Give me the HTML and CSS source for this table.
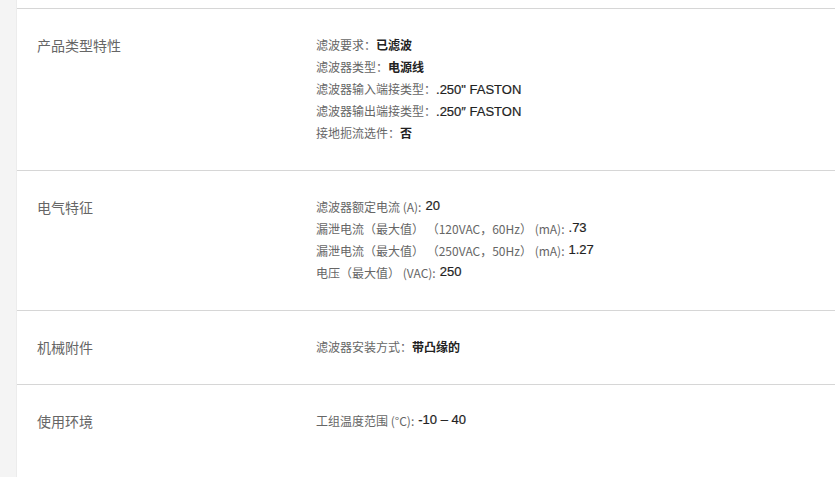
FILE: index.html
```html
<!DOCTYPE html>
<html lang="zh-CN">
<head>
<meta charset="utf-8">
<title>产品规格</title>
<link rel="stylesheet" href="styles.css">
</head>
<body>
<div class="page">
  <aside class="rail"></aside>
  <main class="specs">
    <section class="group">
      <h3 class="group-title">产品类型特性</h3>
      <ul class="attrs">
        <li><span class="k">滤波要求：</span><span class="v">已滤波</span></li>
        <li><span class="k">滤波器类型：</span><span class="v">电源线</span></li>
        <li><span class="k">滤波器输入端接类型：</span><span class="v lat">.250" FASTON</span></li>
        <li><span class="k">滤波器输出端接类型：</span><span class="v lat">.250″ FASTON</span></li>
        <li><span class="k">接地扼流选件：</span><span class="v">否</span></li>
      </ul>
    </section>
    <section class="group">
      <h3 class="group-title">电气特征</h3>
      <ul class="attrs">
        <li><span class="k">滤波器额定电流 (A):</span><span class="v lat num">20</span></li>
        <li><span class="k">漏泄电流（最大值） （120VAC，60Hz） (mA):</span><span class="v lat num">.73</span></li>
        <li><span class="k">漏泄电流（最大值） （250VAC，50Hz） (mA):</span><span class="v lat num">1.27</span></li>
        <li><span class="k">电压（最大值） (VAC):</span><span class="v lat num">250</span></li>
      </ul>
    </section>
    <section class="group">
      <h3 class="group-title">机械附件</h3>
      <ul class="attrs">
        <li><span class="k">滤波器安装方式：</span><span class="v">带凸缘的</span></li>
      </ul>
    </section>
    <section class="group last">
      <h3 class="group-title">使用环境</h3>
      <ul class="attrs">
        <li><span class="k">工组温度范围 (°C):</span><span class="v lat num">-10 – 40</span></li>
      </ul>
    </section>
  </main>
</div>
</body>
</html>
```
FILE: styles.css
```css
* { box-sizing: border-box; }
html, body {
  margin: 0;
  padding: 0;
  background: #fff;
}
body {
  font-family: "Liberation Sans", "Noto Sans CJK SC", Arial, sans-serif;
  color: #333;
}
.page {
  display: flex;
  min-height: 477px;
}
.rail {
  width: 17px;
  flex: 0 0 17px;
  background: #f4f4f4;
  border-right: 1px solid #ececec;
}
.specs {
  flex: 1;
  padding-top: 8px;
}
.group {
  display: grid;
  grid-template-columns: 299px 1fr;
  align-items: start;
  border-top: 1px solid #d6d6d6;
  padding: 25px 0 26px;
}
.group-title {
  margin: 0;
  padding-left: 20px;
  font-family: "Noto Sans CJK SC", sans-serif;
  font-weight: normal;
  font-size: 14px;
  line-height: 22px;
  height: 22px;
  color: #666;
}
.attrs {
  list-style: none;
  margin: 0;
  padding: 0;
}
.attrs li {
  display: flex;
  align-items: baseline;
  height: 22px;
  font-size: 12px;
  line-height: 22px;
  white-space: nowrap;
}
.k {
  color: #666;
  font-family: "Noto Sans CJK SC", sans-serif;
}
.v {
  color: #222;
  font-weight: bold;
  font-family: "Noto Sans CJK SC", sans-serif;
}
.v.lat {
  font-family: "Liberation Sans", Arial, sans-serif;
  font-size: 13px;
  font-weight: normal;
  -webkit-text-stroke: 0.2px #222;
}
.v.num {
  margin-left: 4px;
  position: relative;
  top: -2px;
}
```
